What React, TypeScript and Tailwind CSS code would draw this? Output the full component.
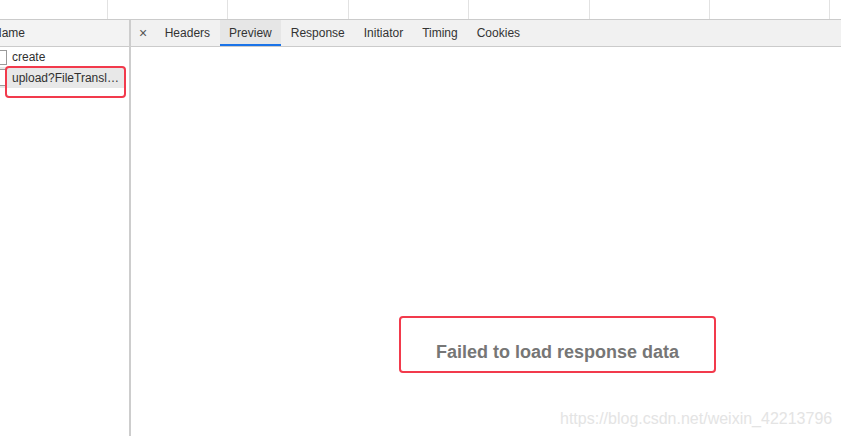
import React from "react";

const gridCols = [108, 120, 121, 120, 121, 120, 120];
const tabs = ["Headers", "Preview", "Response", "Initiator", "Timing", "Cookies"];

function App() {
  return (
    <div
      className="relative w-[841px] h-[436px] overflow-hidden bg-white text-[#303030]"
      style={{ fontFamily: '"Liberation Sans", Arial, sans-serif' }}
    >
      {/* waterfall grid strip */}
      <div className="flex h-[20px] border-b border-[#cbcbcb]">
        {gridCols.map((w, i) => (
          <div
            key={i}
            className="h-full border-r border-[#e2e2e2] shrink-0"
            style={{ width: w }}
          />
        ))}
        <div className="flex-1" />
      </div>

      <div className="flex h-[416px]">
        {/* request list */}
        <div className="w-[131px] shrink-0 border-r-2 border-[#cdcdcd] flex flex-col">
          <div className="h-[27px] bg-[#f3f3f3] border-b border-[#cbcbcb] flex items-center overflow-hidden">
            <span className="text-[12px] ml-[-7px]">Name</span>
          </div>
          <div className="h-[20px] flex items-center">
            <div className="w-[7px] h-[15px] border border-l-0 border-[#9a9a9a] bg-white" />
            <span className="text-[12px] ml-[5px]">create</span>
          </div>
          <div className="h-[21px] mr-[5px] flex items-center bg-[#e8e8e8]">
            <div className="w-[7px] h-[17px] border border-l-0 border-[#9a9a9a] bg-white" />
            <span className="text-[12px] ml-[5px] truncate">upload?FileTransl…</span>
          </div>
        </div>

        {/* detail pane */}
        <div className="flex-1 flex flex-col">
          <div className="h-[27px] bg-[#f1f1f1] border-b border-[#cbcbcb] flex items-stretch text-[12px] text-[#333]">
            <div className="px-[8px] flex items-center text-[#555] text-[14px]">×</div>
            {tabs.map((t) => (
              <div
                key={t}
                className={
                  t === "Preview"
                    ? "px-[9.5px] flex items-center bg-[#e6e6e6] border-b-2 border-[#1a73e8] pt-[2px]"
                    : "px-[9.5px] flex items-center"
                }
              >
                {t}
              </div>
            ))}
          </div>
          <div className="flex-1 pl-[305px] pt-[292px]">
            <span className="text-[18px] leading-[27px] font-bold text-[#767676]">
              Failed to load response data
            </span>
          </div>
        </div>
      </div>

      {/* annotations */}
      <div className="absolute left-[5px] top-[66px] w-[121px] h-[32px] border-2 border-[#f23a4c] rounded-[4px]" />
      <div className="absolute left-[399px] top-[316px] w-[317px] h-[57px] border-2 border-[#f23a4c] rounded-[4px]" />
      <div className="absolute left-[560px] top-[407px] text-[16px] text-[#e4e4e4]">
        https://blog.csdn.net/weixin_42213796
      </div>
    </div>
  );
}

export default App;
